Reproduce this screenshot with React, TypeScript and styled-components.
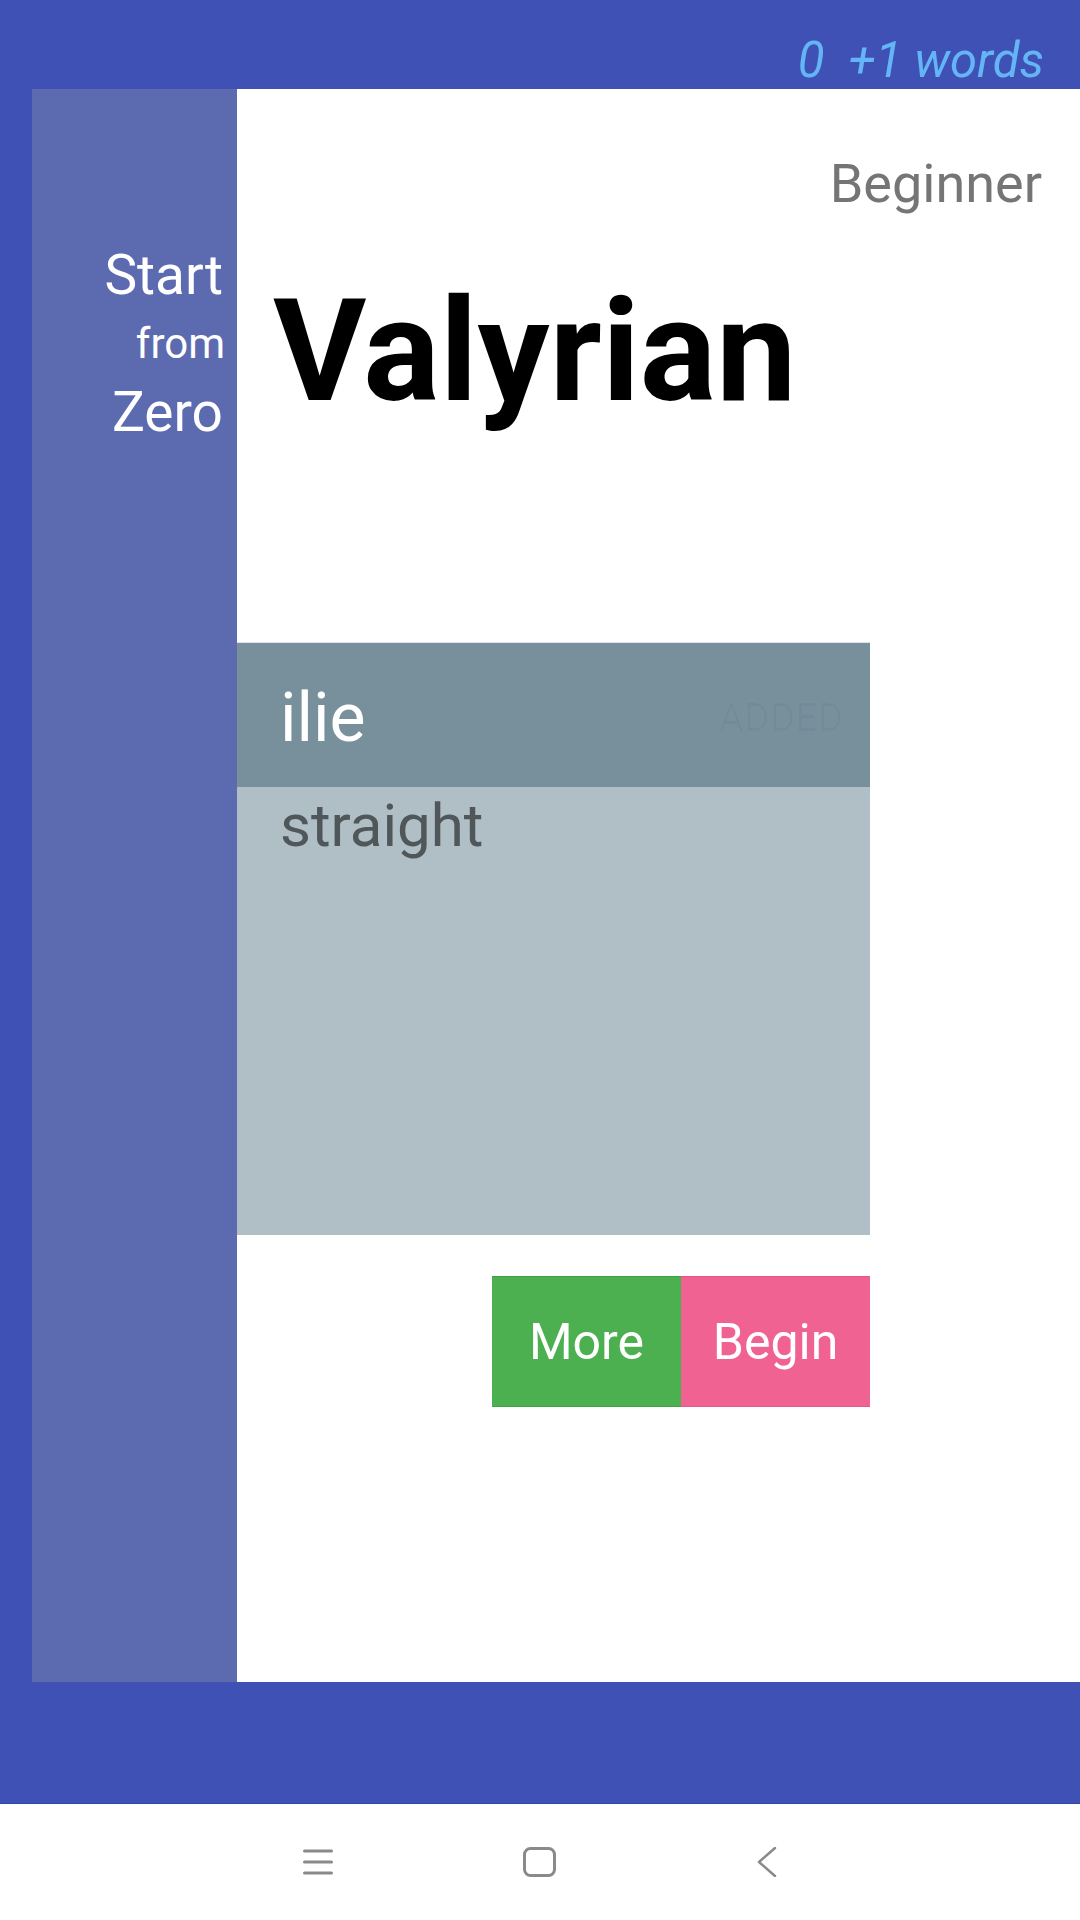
import React from "react";
import styled, { createGlobalStyle } from "styled-components";

const GlobalStyle = createGlobalStyle`
  html, body {
    margin: 0;
    padding: 0;
  }
  body {
    font-family: Roboto, "Noto Sans", "Liberation Sans", sans-serif;
    background: #3f51b5;
  }
  * {
    box-sizing: border-box;
  }
`;

const Screen = styled.div`
  width: 1080px;
  height: 1920px;
  display: flex;
  flex-direction: column;
  background: #3f51b5;
  overflow: hidden;
`;

const TopBar = styled.header`
  height: 89px;
  flex: none;
  display: flex;
  justify-content: flex-end;
  align-items: flex-start;
  gap: 24px;
  padding: 37px 36px 0 0;
  color: #64b5f6;
  font-style: italic;
  font-size: 49px;
  line-height: 48px;
`;

const Main = styled.main`
  height: 1593px;
  flex: none;
  display: flex;
  padding-left: 32px;
`;

const SidePanel = styled.aside`
  width: 205px;
  flex: none;
  background: #5c6bb0;
  display: flex;
  flex-direction: column;
  align-items: flex-end;
  padding: 154px 14px 0 0;
  color: #ffffff;
`;

const SideWord = styled.span<{ $size: number; $gap: number; $shift: number }>`
  font-size: ${(p) => p.$size}px;
  line-height: 64px;
  margin-top: ${(p) => p.$gap}px;
  margin-right: ${(p) => p.$shift}px;
`;

const Content = styled.section`
  flex: 1;
  background: #ffffff;
  display: flex;
  flex-direction: column;
  padding-top: 63px;
  box-shadow: 0 1px 0 #2c3c9e;
`;

const Level = styled.div`
  text-align: right;
  padding-right: 38px;
  font-size: 54px;
  line-height: 64px;
  color: #757575;
`;

const Title = styled.h1`
  margin: 65px 0 0;
  padding-left: 36px;
  font-size: 143px;
  line-height: 140px;
  font-weight: 700;
  color: #000000;
`;

const Card = styled.article`
  margin-top: 222px;
  width: 633px;
  display: flex;
  flex-direction: column;
  box-shadow: 0 -1px 0 #dfe5e8;
`;

const CardHeader = styled.div`
  height: 144px;
  background: #78909c;
  display: flex;
  align-items: center;
  justify-content: space-between;
  padding: 6px 27px 0 43px;
`;

const Word = styled.span`
  font-size: 68px;
  line-height: 1;
  color: #ffffff;
`;

const Status = styled.span`
  font-size: 39px;
  line-height: 1;
  color: rgba(0, 0, 0, 0.026);
`;

const CardBody = styled.div`
  height: 448px;
  background: #b0bec5;
  padding: 9px 43px 0;
  font-size: 60px;
  line-height: 60px;
  color: #50575b;
`;

const Actions = styled.div`
  margin-top: 41px;
  width: 633px;
  display: flex;
  justify-content: flex-end;
`;

const ActionButton = styled.button<{ $bg: string; $edge: string }>`
  width: 189px;
  height: 131px;
  border: 0;
  padding: 0;
  background: ${(p) => p.$bg};
  box-shadow: inset 0 1px 0 ${(p) => p.$edge}, inset 0 -1px 0 ${(p) => p.$edge};
  color: #ffffff;
  font-family: inherit;
  font-size: 50px;
  line-height: 1;
  display: flex;
  align-items: center;
  justify-content: center;
`;

const Footer = styled.footer`
  height: 122px;
  flex: none;
  background: #3f51b5;
  border-bottom: 1px solid #3343ae;
`;

const NavBar = styled.nav`
  height: 116px;
  flex: none;
  background: #ffffff;
  display: flex;
  align-items: center;
  justify-content: center;
`;

const NavIcon = styled.svg<{ $offset: number }>`
  display: block;
  margin-left: ${(p) => p.$offset}px;
  stroke: #8a8a8a;
  fill: none;
`;

export default function App() {
  return (
    <>
      <GlobalStyle />
      <Screen>
        <TopBar>
          <span>0</span>
          <span>+1 words</span>
        </TopBar>
        <Main>
          <SidePanel>
            <SideWord $size={55} $gap={0} $shift={0}>Start</SideWord>
            <SideWord $size={42} $gap={5} $shift={-2}>from</SideWord>
            <SideWord $size={55} $gap={4} $shift={0}>Zero</SideWord>
          </SidePanel>
          <Content>
            <Level>Beginner</Level>
            <Title>Valyrian</Title>
            <Card>
              <CardHeader>
                <Word>ilie</Word>
                <Status>ADDED</Status>
              </CardHeader>
              <CardBody>straight</CardBody>
            </Card>
            <Actions>
              <ActionButton $bg="#4caf50" $edge="#3f9f43">More</ActionButton>
              <ActionButton $bg="#f06292" $edge="#e85587">Begin</ActionButton>
            </Actions>
          </Content>
        </Main>
        <Footer />
        <NavBar>
          <NavIcon $offset={0} width="30" height="30" viewBox="0 0 30 30" strokeWidth="3" strokeLinecap="round">
            <line x1="1.5" y1="4" x2="28.5" y2="4" />
            <line x1="1.5" y1="15" x2="28.5" y2="15" />
            <line x1="1.5" y1="26" x2="28.5" y2="26" />
          </NavIcon>
          <NavIcon $offset={190} width="33" height="30" viewBox="0 0 33 30" strokeWidth="3">
            <rect x="1.5" y="1.5" width="30" height="27" rx="6" />
          </NavIcon>
          <NavIcon $offset={201} width="20" height="30" viewBox="0 0 20 30" strokeWidth="2.5" strokeLinecap="round" strokeLinejoin="round">
            <polyline points="18,1 2,15 18,29" />
          </NavIcon>
        </NavBar>
      </Screen>
    </>
  );
}
